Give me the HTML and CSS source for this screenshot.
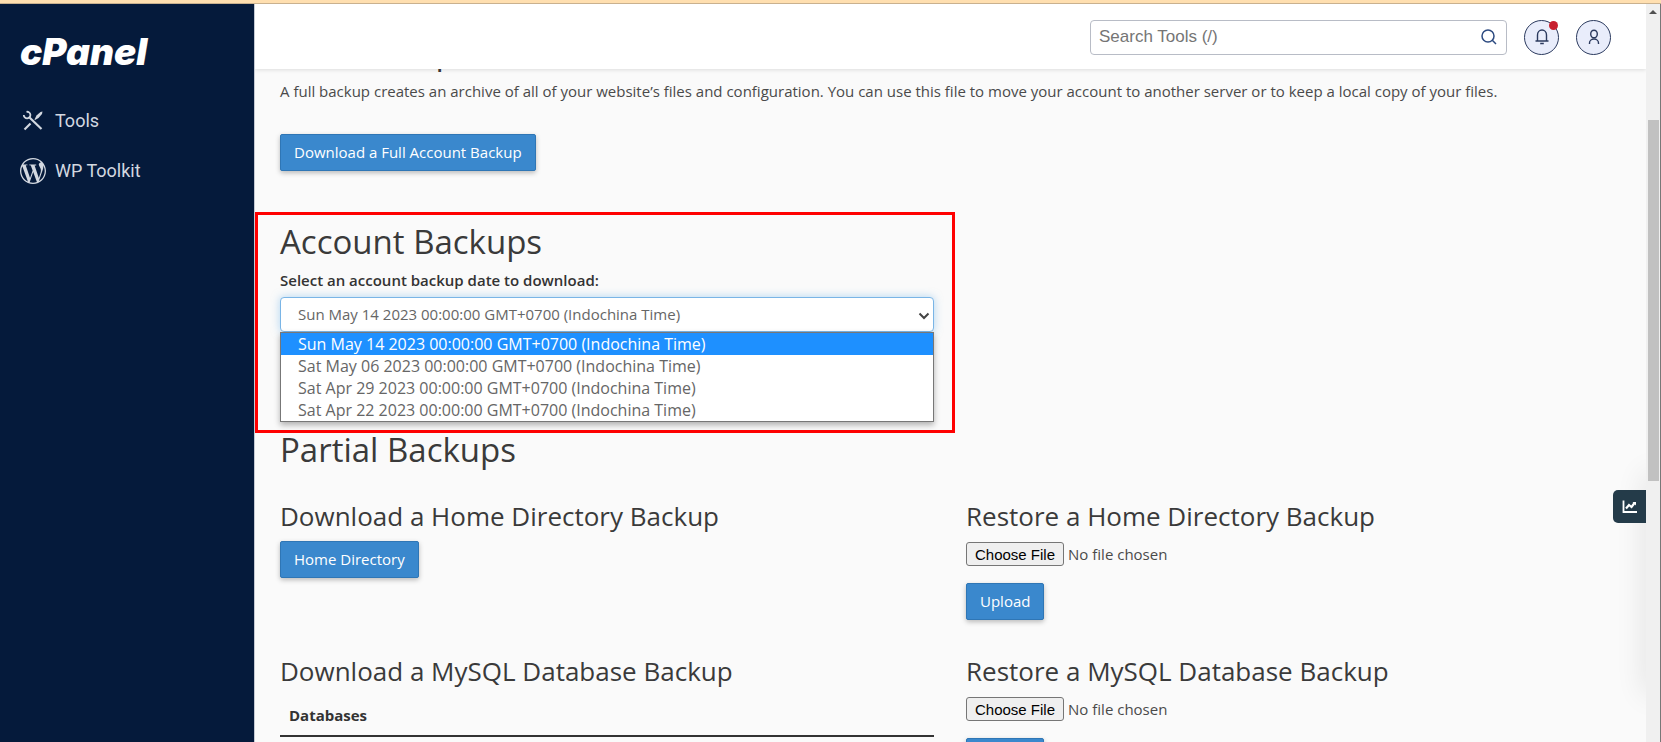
FILE: index.html
```html
<!DOCTYPE html>
<html lang="en">
<head>
    <meta charset="UTF-8">
    <meta name="viewport" content="width=device-width, initial-scale=1.0">
    <title>cPanel - Backup</title>
    <link rel="stylesheet" href="styles.css">
</head>
<body>

    <div class="notice-bar"></div>

    <div class="app">
        <nav class="sidebar">
            <a href="#" class="logo">cPanel</a>
            <a href="#" class="nav-item">
                <svg class="nav-icon" viewBox="0 0 26 26">
                    <path d="M4.500 21.500 L10.500 15.500" stroke="#d3d8e0" stroke-width="2.200" fill="none"/>
                    <path d="M14.500 11.500 L16.500 7.500 L20.500 4 L22.500 3.500 L22 6 L18.500 10 L15 12 Z" fill="#d3d8e0"/>
                    <path d="M9 9 L21.500 21" stroke="#d3d8e0" stroke-width="2.200" fill="none"/>
                    <path d="M6.500 3.800 A3.300 3.300 0 1 1 3.800 7" fill="none" stroke="#d3d8e0" stroke-width="1.800"/>
                </svg>
                <span>Tools</span>
            </a>
            <a href="#" class="nav-item">
                <svg class="nav-icon" viewBox="0 0 24 24" fill="#d3d8e0">
                    <path d="M21.469 6.825c.84 1.537 1.318 3.3 1.318 5.175 0 3.979-2.156 7.456-5.363 9.325l3.295-9.527c.615-1.54.82-2.771.82-3.864 0-.405-.026-.78-.07-1.11m-7.981.105c.647-.03 1.232-.105 1.232-.105.582-.075.514-.93-.067-.899 0 0-1.755.135-2.88.135-1.064 0-2.850-.15-2.850-.15-.585-.03-.661.855-.075.885 0 0 .54.061 1.125.09l1.680 4.605-2.370 7.080L5.354 6.900c.649-.03 1.234-.1 1.234-.1.585-.075.516-.93-.065-.896 0 0-1.746.138-2.874.138-.2 0-.438-.008-.690-.015C4.911 3.150 8.235 1.215 12 1.215c2.809 0 5.365 1.072 7.286 2.833-.046-.003-.091-.009-.141-.009-1.060 0-1.812.923-1.812 1.914 0 .89.513 1.643 1.060 2.531.411.720.890 1.643.890 2.977 0 .915-.354 1.994-.821 3.479l-1.075 3.585-3.900-11.610.001.015zM12 22.784c-1.059 0-2.081-.153-3.048-.437l3.237-9.406 3.315 9.087c.024.053.050.101.078.149-1.120.393-2.325.607-3.582.607M1.211 12c0-1.564.336-3.050.935-4.390L7.290 21.709C3.694 19.960 1.212 16.271 1.211 12M12 0C5.385 0 0 5.385 0 12s5.385 12 12 12 12-5.385 12-12S18.615 0 12 0"/>
                </svg>
                <span>WP Toolkit</span>
            </a>
        </nav>

        <div class="page">
            <header class="header">
                <form class="search">
                    <input type="text" class="search-input" placeholder="Search Tools (/)" aria-label="Search Tools">
                    <button type="button" class="search-button" aria-label="Search">
                        <svg width="18" height="18" viewBox="0 0 18 18" fill="none" stroke="#2c4a80" stroke-width="1.500">
                            <circle cx="8" cy="8" r="6"/>
                            <path d="M12.300 12.300 L16 16"/>
                        </svg>
                    </button>
                </form>
                <button type="button" class="round-button" aria-label="Notifications">
                    <svg width="18" height="18" viewBox="0 0 18 18" fill="none" stroke="#2b3a5e" stroke-width="1.400">
                        <path d="M2.500 13 H15.500 M4.500 13 V7 A4.500 5 0 0 1 13.500 7 V13 M7.200 15.500 H10.800"/>
                    </svg>
                    <span class="dot"></span>
                </button>
                <button type="button" class="round-button" aria-label="Account">
                    <svg width="18" height="18" viewBox="0 0 18 18" fill="none" stroke="#2b3a5e" stroke-width="1.400">
                        <ellipse cx="9" cy="6" rx="3.300" ry="3.800"/>
                        <path d="M4.500 16 V15 A4.500 4 0 0 1 13.500 15 V16"/>
                    </svg>
                </button>
            </header>

            <main class="content">
                <section class="full-backup">
                    <h2>Full Backup</h2>
                    <p>A full backup creates an archive of all of your website’s files and configuration. You can use this file to move your account to another server or to keep a local copy of your files.</p>
                    <button type="button" class="btn">Download a Full Account Backup</button>
                </section>

                <section class="account-backups">
                    <h2>Account Backups</h2>
                    <label for="backup-date">Select an account backup date to download:</label>
                    <div class="select-wrap">
                        <select id="backup-date" class="select">
                            <option>Sun May 14 2023 00:00:00 GMT+0700 (Indochina Time)</option>
                            <option>Sat May 06 2023 00:00:00 GMT+0700 (Indochina Time)</option>
                            <option>Sat Apr 29 2023 00:00:00 GMT+0700 (Indochina Time)</option>
                            <option>Sat Apr 22 2023 00:00:00 GMT+0700 (Indochina Time)</option>
                        </select>
                        <svg class="select-arrow" width="12" height="8" viewBox="0 0 12 8" fill="none" stroke="#444" stroke-width="2">
                            <path d="M1.500 1.500 L6 6 L10.500 1.500"/>
                        </svg>
                        <ul class="options" role="listbox" aria-label="Backup dates">
                            <li role="option" class="selected" aria-selected="true">Sun May 14 2023 00:00:00 GMT+0700 (Indochina Time)</li>
                            <li role="option">Sat May 06 2023 00:00:00 GMT+0700 (Indochina Time)</li>
                            <li role="option">Sat Apr 29 2023 00:00:00 GMT+0700 (Indochina Time)</li>
                            <li role="option">Sat Apr 22 2023 00:00:00 GMT+0700 (Indochina Time)</li>
                        </ul>
                    </div>
                </section>

                <section class="partial-backups">
                    <h2>Partial Backups</h2>
                    <div class="grid">
                        <div class="cell">
                            <h3>Download a Home Directory Backup</h3>
                            <button type="button" class="btn">Home Directory</button>
                        </div>
                        <div class="cell">
                            <h3 id="restore-home">Restore a Home Directory Backup</h3>
                            <input type="file" class="file" aria-labelledby="restore-home">
                            <button type="button" class="btn">Upload</button>
                        </div>
                        <div class="cell">
                            <h3>Download a MySQL Database Backup</h3>
                            <table class="databases">
                                <thead>
                                    <tr><th>Databases</th></tr>
                                </thead>
                            </table>
                        </div>
                        <div class="cell">
                            <h3 id="restore-mysql">Restore a MySQL Database Backup</h3>
                            <input type="file" class="file" aria-labelledby="restore-mysql">
                            <button type="button" class="btn">Upload</button>
                        </div>
                    </div>
                </section>
            </main>

            <div class="stats-panel"></div>
            <button type="button" class="stats-button" aria-label="Statistics">
                <svg width="16" height="14" viewBox="0 0 16 14" fill="none" stroke="#fff" stroke-width="1.800">
                    <path d="M1.500 0.500 V12 H15"/>
                    <path d="M4 8.500 L7 5 L9.500 7 L12.500 3" stroke-width="2.200"/>
                    <path d="M10.500 2 H14 V5.500 Z" fill="#fff" stroke="none"/>
                </svg>
            </button>
        </div>

        <div class="scrollbar">
            <span class="scroll-up"></span>
            <span class="scroll-thumb"></span>
        </div>
    </div>

</body>
</html>
```
FILE: styles.css
```css
* {
    box-sizing: border-box;
}

body {
    display: flex;
    flex-direction: column;
    height: 100vh;
    margin: 0;
    overflow: hidden;
    background-color: #fafafa;
    color: #4a4a4a;
    font-family: "Open Sans", sans-serif;
    font-size: 15px;
    line-height: 24px;
}

h2, h3, p, ul {
    margin: 0;
    padding: 0;
}

h2 {
    color: #3a3a3a;
    font-size: 33px;
    font-weight: 400;
    line-height: 34px;
}

h3 {
    color: #3a3a3a;
    font-size: 26px;
    font-weight: 400;
    line-height: 32px;
}

.notice-bar {
    flex: none;
    height: 4px;
    background-color: #ffdfb0;
    border-bottom: 1px solid #c9b18f;
}

.app {
    display: flex;
    flex: 1;
    min-height: 0;
}

/* sidebar */
.sidebar {
    display: flex;
    flex-direction: column;
    flex: none;
    width: 255px;
    padding: 28px 20px;
    background-color: #051a3b;
    border-right: 1px solid #c5cad3;
}

.logo {
    margin-bottom: 28px;
    color: #fff;
    font-family: Inter, sans-serif;
    font-size: 37px;
    font-style: italic;
    font-weight: 900;
    line-height: 40px;
    text-decoration: none;
}

.nav-item {
    display: flex;
    align-items: center;
    gap: 9px;
    height: 42px;
    margin-bottom: 8px;
    color: #d3d8e0;
    font-family: Roboto, sans-serif;
    font-size: 18px;
    text-decoration: none;
}

.nav-icon {
    width: 26px;
    height: 26px;
}

/* header */
.page {
    position: relative;
    display: flex;
    flex-direction: column;
    flex: 1;
    min-width: 0;
    overflow: hidden;
}

.header {
    position: relative;
    z-index: 1;
    display: flex;
    align-items: center;
    justify-content: flex-end;
    gap: 17px;
    flex: none;
    height: 65px;
    padding: 1px 35px 0;
    background-color: #fff;
    box-shadow: 0 1px 4px rgba(0, 0, 0, 0.12);
}

.search {
    display: flex;
    width: 417px;
    height: 35px;
    border: 1px solid #b8bcc6;
    border-radius: 4px;
}

.search-input {
    flex: 1;
    min-width: 0;
    padding: 0 8px;
    border: none;
    background: none;
    font-family: "Liberation Sans", Arial, sans-serif;
    font-size: 17px;
    outline: none;
}

.search-input::placeholder {
    color: #757575;
}

.search-button {
    display: flex;
    align-items: center;
    justify-content: center;
    width: 34px;
    padding: 0;
    border: none;
    background: none;
}

.round-button {
    position: relative;
    display: flex;
    align-items: center;
    justify-content: center;
    width: 35px;
    height: 35px;
    padding: 0;
    border: 1px solid #2b3a5e;
    border-radius: 50%;
    background-color: #e9edfb;
}

.dot {
    position: absolute;
    top: 0;
    right: 0;
    width: 9px;
    height: 9px;
    border-radius: 50%;
    background-color: #c8202f;
}

/* content */
.content {
    margin-top: -34px;
    padding: 0 26px 0 25px;
}

.btn {
    display: block;
    height: 37px;
    padding: 0 13px 2px;
    border: 1px solid #2f76b5;
    border-radius: 2px;
    background-color: #3a88cd;
    box-shadow: 0 2px 5px rgba(0, 0, 0, 0.26);
    color: #fff;
    font-family: inherit;
    font-size: 15px;
}

.full-backup p {
    margin: 10px 0 31px;
}

/* highlighted block */
.account-backups {
    width: calc(50% + 30px);
    height: 221px;
    margin: 41px 0 0 -25px;
    padding: 10px 18px 0 22px;
    border: 3px solid #f00;
}

.account-backups label {
    display: block;
    margin: 9px 0 5px;
    color: #333;
    font-weight: 600;
}

.select-wrap {
    position: relative;
}

.select {
    display: block;
    width: 100%;
    height: 35px;
    padding: 0 17px 2px;
    border: 1px solid #7ab5e6;
    border-radius: 4px;
    background-color: #fff;
    box-shadow: 0 0 8px rgba(102, 175, 233, 0.5);
    color: #666;
    font-family: inherit;
    font-size: 15px;
    appearance: none;
}

.select-arrow {
    position: absolute;
    top: 15px;
    right: 4px;
}

.options {
    position: absolute;
    top: 100%;
    left: 0;
    right: 0;
    border: 1px solid #777;
    background-color: #fff;
    box-shadow: 0 3px 6px rgba(0, 0, 0, 0.3);
    color: #666;
    font-size: 16px;
    line-height: 22px;
    list-style: none;
}

.options li {
    padding: 0 17px;
}

.options .selected {
    background-color: #1e90ff;
    color: #fff;
}

.grid {
    display: grid;
    grid-template-columns: 1fr 1fr;
    gap: 35px 32px;
    margin-top: 33px;
}

.cell .btn {
    margin-top: 9px;
}

.file {
    display: block;
    height: 24px;
    margin: 10px 0 0;
    color: #4a4a4a;
    font-family: inherit;
    font-size: 15px;
}

.cell .file + .btn {
    margin-top: 17px;
}

.file::file-selector-button {
    height: 24px;
    padding: 0 8px;
    border: 1px solid #767676;
    border-radius: 3px;
    background-color: #efefef;
    color: #000;
    font-family: "Liberation Sans", Arial, sans-serif;
    font-size: 15px;
}

.databases {
    width: 100%;
    margin-top: 8px;
    border-collapse: collapse;
}

.databases th {
    padding: 8px 9px;
    border-bottom: 2px solid #333;
    color: #333;
    text-align: left;
}

/* statistics drawer, closed */
.stats-panel {
    position: absolute;
    top: 470px;
    right: -20px;
    width: 20px;
    height: 220px;
    box-shadow: 0 0 30px rgba(0, 0, 0, 0.12);
}

.stats-button {
    position: absolute;
    top: 486px;
    right: 0;
    display: flex;
    align-items: center;
    justify-content: center;
    width: 33px;
    height: 33px;
    padding: 0;
    border: none;
    border-radius: 5px 0 0 5px;
    background-color: #243b49;
}

.scrollbar {
    display: flex;
    flex-direction: column;
    align-items: center;
    flex: none;
    width: 15px;
    background-color: #f0f0f0;
    border-right: 1px solid #777;
}

.scroll-up {
    margin-top: 6px;
    border: 4px solid transparent;
    border-top: none;
    border-bottom-color: #505050;
}

.scroll-thumb {
    width: 11px;
    height: 361px;
    margin-top: 106px;
    background-color: #c1c1c1;
}
```
